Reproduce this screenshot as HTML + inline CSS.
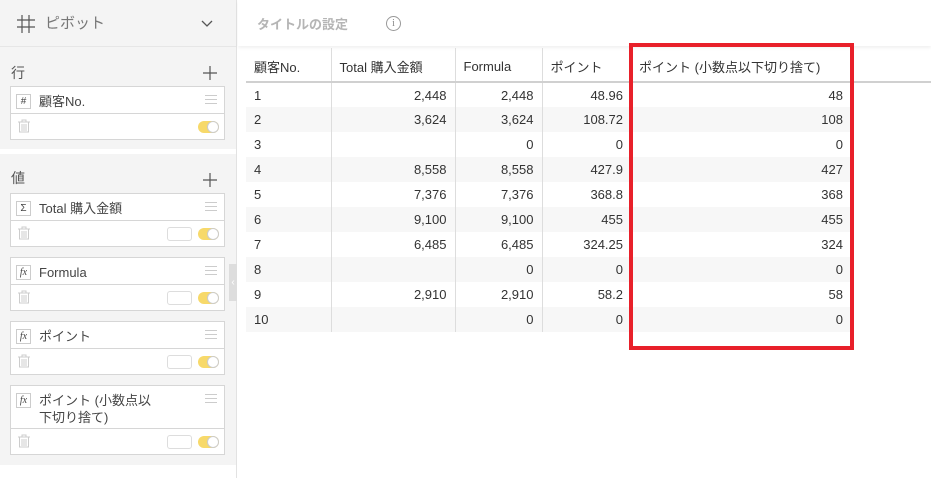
<!DOCTYPE html>
<html><head><meta charset="utf-8"><style>
*{box-sizing:border-box;margin:0;padding:0}
body{width:931px;height:478px;overflow:hidden;background:#fff;font-family:"Liberation Sans","Noto Sans CJK JP",sans-serif;font-size:13px;color:#333;position:relative}
.a{position:absolute}
#side{left:0;top:0;width:237px;height:478px;background:#f4f4f4;border-right:1px solid #e2e2e2}
.card{position:absolute;left:10px;width:215px;background:#fff;border:1px solid #d6d6d6}
.card .top{position:relative;border-bottom:1px solid #d6d6d6}
.card .bot{position:relative;height:26px}
.ic{position:absolute;left:5px;top:7px;width:15px;height:15px;border:1px solid #ccc;font-size:10px;text-align:center;line-height:13px;color:#444;font-style:italic;font-family:"Liberation Serif",serif}
.lbl{position:absolute;left:28px;top:6px;font-size:13px;color:#444;line-height:17px}
.hb{position:absolute;right:7px;top:8px;width:12px;height:9px;border-top:1px solid #ccc;border-bottom:1px solid #ccc}
.hb:after{content:"";position:absolute;left:0;right:0;top:3px;border-top:1px solid #ccc}
.tr{position:absolute;left:7px;top:5px}
.box{position:absolute;left:156px;top:6px;width:25px;height:14px;border:1px solid #ddd;border-radius:3px}
.tg{position:absolute;left:187px;top:7px;width:21px;height:12px;border-radius:6px;background:#f7d96a}
.tg:after{content:"";position:absolute;right:0;top:0;width:12px;height:12px;border-radius:6px;background:#fff;border:1px solid #ccc;box-sizing:border-box}
.sec{position:absolute;left:11px;font-size:14px;color:#555}
.plus{position:absolute;left:203px}
table{position:absolute;left:246px;top:48px;border-collapse:collapse;font-size:13px}
td,th{height:25px;padding:0 8px;font-weight:normal;white-space:nowrap}
th{height:34px;text-align:left;border-bottom:2px solid #d0d0d0;border-left:1px solid #ddd;color:#333;padding-top:4px}
td{text-align:right;border-left:1px solid #ddd;color:#333}
td:first-child,th:first-child{text-align:left;border-left:none}
td:last-child{padding-right:11px}
tr.s td{background:#f7f7f7}
</style></head><body>
<div id="side" class="a">
  <div class="a" style="left:0;top:0;width:236px;height:47px;border-bottom:1px solid #e6e6e6"></div>
  <svg class="a" style="left:16px;top:14px" width="20" height="20" viewBox="0 0 20 20" stroke="#555" stroke-width="1.2" fill="none"><path d="M6 1v18M13 1v18M1 6h18M1 13h18"/></svg>
  <div class="a" style="left:45px;top:12px;font-size:15px;color:#777">ピボット</div>
  <svg class="a" style="left:201px;top:20px" width="12" height="8" viewBox="0 0 12 8" stroke="#555" stroke-width="1.3" fill="none"><path d="M1 1l5 5 5-5"/></svg>
  <div class="sec" style="top:63px">行</div><svg class="plus" style="top:66px" width="14" height="14" viewBox="0 0 14 14" stroke="#555" stroke-width="1.2"><path d="M7 0v14M0 7h14"/></svg>
  <div class="card" style="top:86px;height:54px"><div class="top" style="height:27px"><div class="ic" style="font-style:normal;font-family:'Liberation Sans',sans-serif">#</div><div class="lbl">顧客No.</div><div class="hb"></div></div>
   <div class="bot"><svg class="tr" width="12" height="14" viewBox="0 0 12 14" stroke="#ccc" fill="none"><path d="M0 3h12M4 3V1h4v2M1.5 3v10h9V3M4 5v7M6 5v7M8 5v7"/></svg><div class="tg"></div></div></div>
  <div class="a" style="left:0;top:149px;width:236px;height:5px;background:#fff"></div>
  <div class="sec" style="top:168px">値</div><svg class="plus" style="top:173px" width="14" height="14" viewBox="0 0 14 14" stroke="#555" stroke-width="1.2"><path d="M7 0v14M0 7h14"/></svg>
  <div class="card" style="top:193px;height:54px"><div class="top" style="height:27px"><div class="ic" style="font-style:normal;font-family:'Liberation Sans',sans-serif">Σ</div><div class="lbl">Total 購入金額</div><div class="hb"></div></div>
   <div class="bot"><svg class="tr" width="12" height="14" viewBox="0 0 12 14" stroke="#ccc" fill="none"><path d="M0 3h12M4 3V1h4v2M1.5 3v10h9V3M4 5v7M6 5v7M8 5v7"/></svg><div class="box"></div><div class="tg"></div></div></div>
  <div class="card" style="top:257px;height:54px"><div class="top" style="height:27px"><div class="ic">fx</div><div class="lbl">Formula</div><div class="hb"></div></div>
   <div class="bot"><svg class="tr" width="12" height="14" viewBox="0 0 12 14" stroke="#ccc" fill="none"><path d="M0 3h12M4 3V1h4v2M1.5 3v10h9V3M4 5v7M6 5v7M8 5v7"/></svg><div class="box"></div><div class="tg"></div></div></div>
  <div class="card" style="top:321px;height:54px"><div class="top" style="height:27px"><div class="ic">fx</div><div class="lbl">ポイント</div><div class="hb"></div></div>
   <div class="bot"><svg class="tr" width="12" height="14" viewBox="0 0 12 14" stroke="#ccc" fill="none"><path d="M0 3h12M4 3V1h4v2M1.5 3v10h9V3M4 5v7M6 5v7M8 5v7"/></svg><div class="box"></div><div class="tg"></div></div></div>
  <div class="card" style="top:385px;height:70px"><div class="top" style="height:43px"><div class="ic">fx</div><div class="lbl">ポイント (小数点以<br>下切り捨て)</div><div class="hb"></div></div>
   <div class="bot"><svg class="tr" width="12" height="14" viewBox="0 0 12 14" stroke="#ccc" fill="none"><path d="M0 3h12M4 3V1h4v2M1.5 3v10h9V3M4 5v7M6 5v7M8 5v7"/></svg><div class="box"></div><div class="tg"></div></div></div>
  <div class="a" style="left:0;top:465px;width:236px;height:13px;background:#fff"></div>
  <div class="a" style="left:229px;top:264px;width:8px;height:37px;background:#ddd;color:#fff;font-size:10px;line-height:37px;text-align:center">‹</div>
</div>
<div class="a" style="left:238px;top:0;width:693px;height:46px;background:#fff;box-shadow:0 2px 3px rgba(0,0,0,0.06)"></div>
<div class="a" style="left:257px;top:14px;font-size:13px;font-weight:bold;color:#b5b5b5">タイトルの設定</div>
<div class="a" style="left:386px;top:16px;width:15px;height:15px;border:1px solid #999;border-radius:50%;font-size:10px;line-height:13px;text-align:center;color:#888;font-family:'Liberation Serif',serif">i</div>
<div class="a" style="left:246px;top:81px;width:685px;border-top:2px solid #d0d0d0"></div>
<table>
<tr><th style="width:85px">顧客No.</th><th style="width:124px">Total 購入金額</th><th style="width:87px">Formula</th><th style="width:89px">ポイント</th><th style="width:223px;border-left:none">ポイント (小数点以下切り捨て)</th></tr>
<tr><td>1</td><td>2,448</td><td>2,448</td><td>48.96</td><td style="border-left:none">48</td></tr>
<tr class="s"><td>2</td><td>3,624</td><td>3,624</td><td>108.72</td><td style="border-left:none">108</td></tr>
<tr><td>3</td><td></td><td>0</td><td>0</td><td style="border-left:none">0</td></tr>
<tr class="s"><td>4</td><td>8,558</td><td>8,558</td><td>427.9</td><td style="border-left:none">427</td></tr>
<tr><td>5</td><td>7,376</td><td>7,376</td><td>368.8</td><td style="border-left:none">368</td></tr>
<tr class="s"><td>6</td><td>9,100</td><td>9,100</td><td>455</td><td style="border-left:none">455</td></tr>
<tr><td>7</td><td>6,485</td><td>6,485</td><td>324.25</td><td style="border-left:none">324</td></tr>
<tr class="s"><td>8</td><td></td><td>0</td><td>0</td><td style="border-left:none">0</td></tr>
<tr><td>9</td><td>2,910</td><td>2,910</td><td>58.2</td><td style="border-left:none">58</td></tr>
<tr class="s"><td>10</td><td></td><td>0</td><td>0</td><td style="border-left:none">0</td></tr>
</table>
<div class="a" style="left:629px;top:43px;width:225px;height:307px;border:4px solid #e8202a"></div>
</body></html>
